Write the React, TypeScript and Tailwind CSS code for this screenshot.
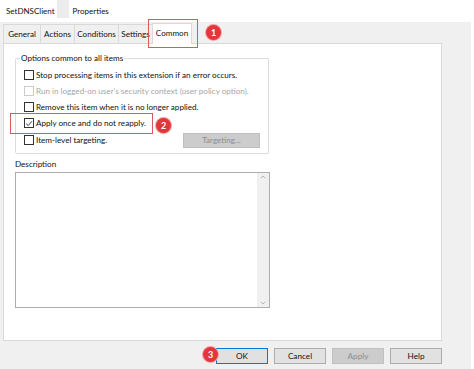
import { useState } from 'react'

const TABS = [
  { label: 'General', w: 'w-[37px]' },
  { label: 'Actions', w: 'w-[34px]' },
  { label: 'Conditions', w: 'w-[44px]' },
  { label: 'Settings', w: 'w-[34px]' }
]

type OptionRow = {
  label: string
  checked?: boolean
  disabled?: boolean
}

const OPTIONS: OptionRow[] = [
  { label: 'Stop processing items in this extension if an error occurs.' },
  { label: "Run in logged-on user's security context (user policy option).", disabled: true },
  { label: 'Remove this item when it is no longer applied.' },
  { label: 'Apply once and do not reapply.', checked: true }
]

function CheckBox({ checked, disabled }: { checked: boolean; disabled?: boolean }) {
  return (
    <span
      className={`flex h-[10px] w-[10px] shrink-0 items-center justify-center border bg-white ${
        disabled ? 'border-[#cccccc]' : 'border-[#333333]'
      }`}
    >
      {checked && (
        <svg viewBox="0 0 10 10" className="h-[9px] w-[9px]">
          <path d="M1.5 5.2 L4 7.6 L8.6 2.2" fill="none" stroke="#222" strokeWidth="1.1" />
        </svg>
      )}
    </span>
  )
}

function Badge({ n }: { n: number }) {
  return (
    <span className="flex h-[15px] w-[15px] items-center justify-center rounded-full bg-[#e5343a] text-[9px] font-bold leading-none text-white shadow-[0_0_0_1px_#f4a2a4]">
      {n}
    </span>
  )
}

function DlgButton({
  label,
  primary,
  disabled
}: {
  label: string
  primary?: boolean
  disabled?: boolean
}) {
  let cls = 'border-[#adadad] bg-[#e1e1e1] text-[#111]'
  if (primary) cls = 'border-[#0078d7] bg-[#e1e1e1] text-[#111]'
  if (disabled) cls = 'border-[#bfbfbf] bg-[#cccccc] text-[#8c8c8c]'
  return (
    <button className={`flex h-[16px] w-[52px] items-center justify-center border text-[8.2px] ${cls}`}>
      {label}
    </button>
  )
}

export default function App() {
  const [opts, setOpts] = useState(OPTIONS.map((o) => !!o.checked))
  const [targeting, setTargeting] = useState(false)

  return (
    <div
      className="relative flex h-[369px] w-[474px] flex-col whitespace-nowrap bg-white text-[8.1px] text-[#111]"
      style={{ fontFamily: 'Lato, "Noto Sans", sans-serif' }}
    >
      {/* title bar */}
      <div className="flex h-[22px] items-center pl-[6px] text-[8px] text-[#111]">
        <span>SetDNSClient</span>
        <span className="ml-[2px] mr-[4px] h-[18px] w-[12px] self-start bg-[#ececec]" />
        <span>Properties</span>
      </div>

      {/* dialog body */}
      <div className="flex w-[471px] flex-1 flex-col bg-[#f0f0f0] px-[3px] pb-[4px]">
        {/* tab strip */}
        <div className="flex h-[21px] items-end">
          {TABS.map((t) => (
            <div
              key={t.label}
              className={`flex h-[19px] ${t.w} items-center justify-center border border-b-0 border-r-0 border-[#d9d9d9] bg-[#f0f0f0]`}
            >
              {t.label}
            </div>
          ))}
          <div className="relative z-10 -mb-px flex h-[21px] w-[40px] items-center justify-center border border-b-0 border-[#d9d9d9] bg-white pb-[2px]">
            Common
          </div>
        </div>

        {/* tab page */}
        <div className="flex h-[298px] w-[439px] flex-col border border-[#d9d9d9] bg-white px-[11px] pt-[14px]">
          {/* group box */}
          <div className="relative h-[96px] w-[254px] rounded-[2px] border border-[#dcdcdc] px-[8px] pt-[8px]">
            <span className="absolute -top-[7px] left-[4px] bg-white px-[1px]">Options common to all items</span>
            <div className="flex flex-col">
              {OPTIONS.map((o, i) => (
                <label
                  key={o.label}
                  className={`flex h-[16px] items-center gap-[2px] ${o.disabled ? 'text-[#a6a6a6]' : ''}`}
                >
                  <span
                    onClick={() =>
                      !o.disabled && setOpts((p) => p.map((v, j) => (j === i ? !v : v)))
                    }
                  >
                    <CheckBox checked={opts[i]} disabled={o.disabled} />
                  </span>
                  <span>{o.label}</span>
                </label>
              ))}
              <div className="flex h-[18px] items-center justify-between">
                <label className="flex items-center gap-[2px]" onClick={() => setTargeting(!targeting)}>
                  <CheckBox checked={targeting} />
                  <span>Item-level targeting.</span>
                </label>
                <button className="flex h-[15px] w-[77px] items-center justify-center border border-[#bfbfbf] bg-[#cccccc] text-[#8c8c8c]">
                  Targeting...
                </button>
              </div>
            </div>
          </div>

          <div className="mt-[4px] h-[12px] leading-[12px]">Description</div>
          <div className="mt-[2px] flex h-[136px] w-[255px] border border-[#adadad] bg-white">
            <div className="flex-1" />
            <div className="flex w-[12px] flex-col items-center justify-between bg-[#f0f0f0] py-[2px]">
              <svg viewBox="0 0 8 5" className="h-[4px] w-[6px]">
                <path d="M1 4.2 L4 1.2 L7 4.2" fill="none" stroke="#a0a0a0" strokeWidth="1" />
              </svg>
              <svg viewBox="0 0 8 5" className="h-[4px] w-[6px]">
                <path d="M1 0.8 L4 3.8 L7 0.8" fill="none" stroke="#a0a0a0" strokeWidth="1" />
              </svg>
            </div>
          </div>
        </div>

        {/* buttons */}
        <div className="mt-[7px] flex w-[439px] justify-end gap-[6px]">
          <DlgButton label="OK" primary />
          <DlgButton label="Cancel" />
          <DlgButton label="Apply" disabled />
          <DlgButton label="Help" />
        </div>
      </div>

      {/* annotations */}
      <div className="pointer-events-none absolute left-[148px] top-[19px] h-[29px] w-[50px] border-[1.5px] border-[#d9595d]" />
      <div className="absolute left-[206px] top-[25px]">
        <Badge n={1} />
      </div>
      <div className="pointer-events-none absolute left-[10px] top-[113px] h-[21px] w-[143px] border-[1.5px] border-[#d9595d]" />
      <div className="absolute left-[156px] top-[118px]">
        <Badge n={2} />
      </div>
      <div className="absolute left-[203px] top-[347px]">
        <Badge n={3} />
      </div>
    </div>
  )
}
